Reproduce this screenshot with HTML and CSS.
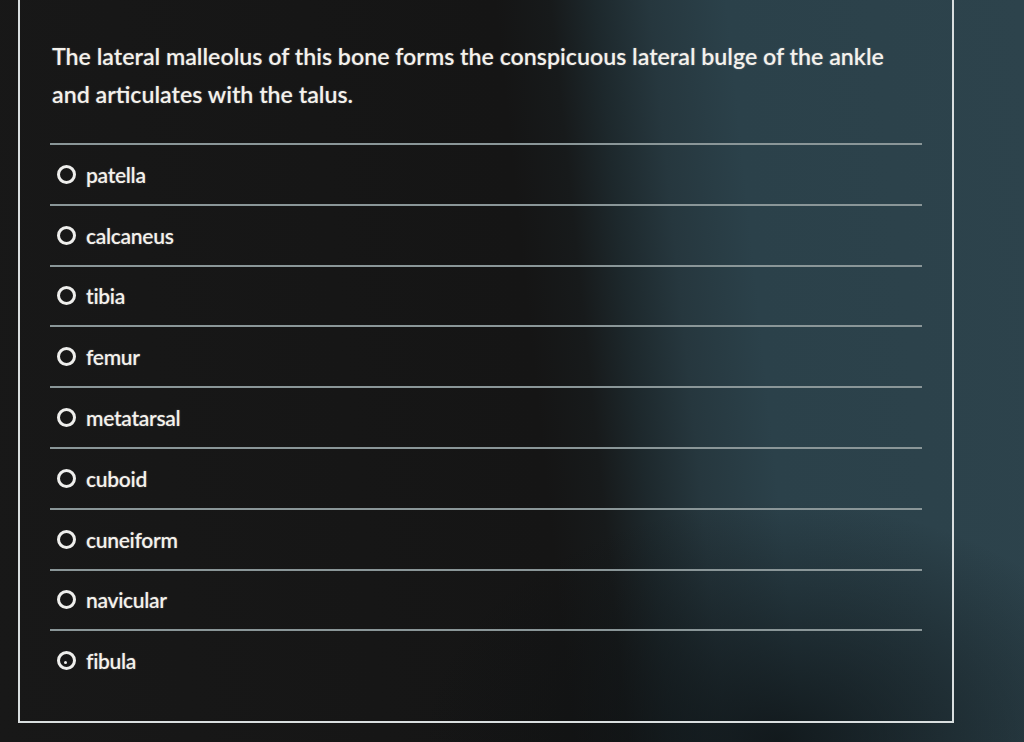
FILE: index.html
```html
<!DOCTYPE html>
<html lang="en">
<head>
<meta charset="utf-8">
<title>Quiz question</title>
<link rel="stylesheet" href="styles.css">
</head>
<body>
<div class="screen">
  <div class="card">
    <p class="question">The lateral malleolus of this bone forms the conspicuous lateral bulge of the ankle and articulates with the talus.</p>
    <ul class="answers">
      <li class="answer"><span class="radio"></span><span class="label">patella</span></li>
      <li class="answer"><span class="radio"></span><span class="label">calcaneus</span></li>
      <li class="answer"><span class="radio"></span><span class="label">tibia</span></li>
      <li class="answer"><span class="radio"></span><span class="label">femur</span></li>
      <li class="answer"><span class="radio"></span><span class="label">metatarsal</span></li>
      <li class="answer"><span class="radio"></span><span class="label">cuboid</span></li>
      <li class="answer"><span class="radio"></span><span class="label">cuneiform</span></li>
      <li class="answer"><span class="radio"></span><span class="label">navicular</span></li>
      <li class="answer"><span class="radio radio-dot"></span><span class="label">fibula</span></li>
    </ul>
  </div>
</div>
</body>
</html>
```
FILE: styles.css
```css
html, body {
  margin: 0;
  padding: 0;
  width: 1024px;
  height: 742px;
  overflow: hidden;
}

body {
  font-family: Lato, "Open Sans", sans-serif;
  background:
    radial-gradient(ellipse 360px 240px at 76% 100%, rgba(12, 16, 18, 0.8), rgba(12, 16, 18, 0) 100%),
    linear-gradient(84deg, #181818 0%, #151515 52%, #171a1b 57%, #1d282c 61%, #26373e 66%, #2b414a 73%, #2d434c 100%);
}

.screen {
  height: 742px;
  padding: 0 70px 0 18px;
  box-sizing: border-box;
}

.card {
  height: 725px;
  margin-top: -2px;
  border: 2px solid #d9dedf;
  box-sizing: border-box;
  padding: 37px 30px 0 30px;
}

.question {
  margin: 0 0 30px 2px;
  font-size: 23.2px;
  font-weight: 600;
  line-height: 38px;
  color: #f4f1ec;
  max-width: 850px;
  text-shadow: 0 0 2px rgba(255, 255, 255, 0.3);
}

.answers {
  list-style: none;
  margin: 0;
  padding: 0;
}

.answer {
  display: flex;
  align-items: center;
  gap: 10px;
  height: 60.8px;
  box-sizing: border-box;
  border-top: 2px solid #8a9698;
  padding-left: 7px;
}

.radio {
  width: 19px;
  height: 19px;
  border: 3px solid #eeeeec;
  border-radius: 50%;
  box-sizing: border-box;
  display: flex;
  align-items: center;
  justify-content: center;
  flex-shrink: 0;
}

.radio-dot::after {
  content: "";
  width: 3px;
  height: 3px;
  border-radius: 50%;
  background: #eeeeec;
  margin: 3px 3px 0 0;
}

.label {
  font-size: 21px;
  font-weight: 600;
  color: #f4f1ec;
  letter-spacing: -0.3px;
  text-shadow: 0 0 2px rgba(255, 255, 255, 0.3);
}
```
